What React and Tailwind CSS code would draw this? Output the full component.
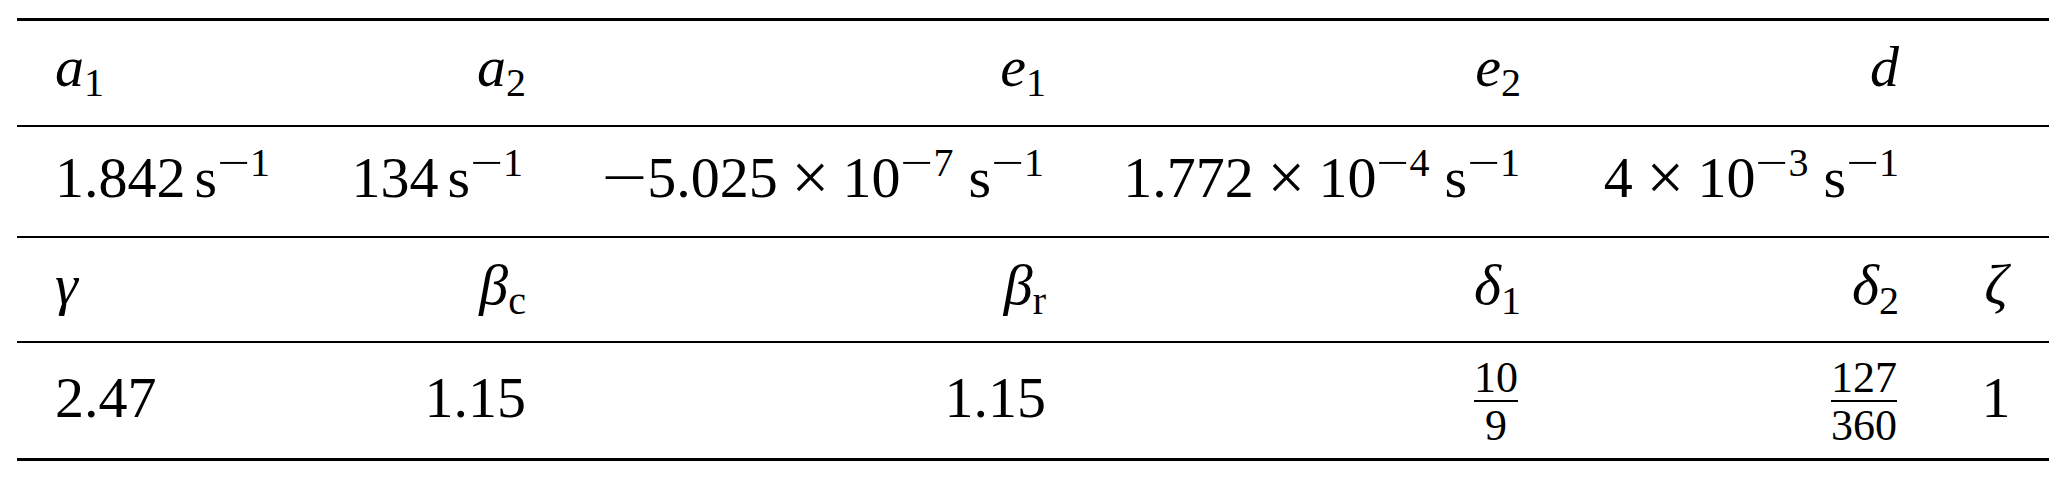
import React from 'react';

const cols = "grid grid-cols-[294px_253px_522px_477px_380px_106px]";

function Sub({ children }) {
  return <span className="relative top-[10px] text-[40px] not-italic">{children}</span>;
}

function Sup({ children }) {
  return <span className="relative -top-[21px] text-[40px]">{children}</span>;
}

function Minus({ small }) {
  return (
    <span className={small ? "inline-block w-[33px] text-center scale-x-[1.45]" : "inline-block w-[45px] text-center scale-x-[1.4]"}>
      −
    </span>
  );
}

// s^{-1}, gap depends on what stands before it
function PerSecond({ afterSup }) {
  return (
    <>
      <span className={afterSup ? "ml-[15px]" : "ml-[9px]"}>s</span>
      <Sup><Minus small />1</Sup>
    </>
  );
}

function Times() {
  return <span className="inline-block mx-[16px] scale-[1.15]">×</span>;
}

function Frac({ num, den }) {
  return (
    <span className="inline-flex flex-col items-center px-[3px] text-[44px] leading-none">
      <span>{num}</span>
      <span className="w-full h-[2px] bg-black"></span>
      <span className="mt-[2px]">{den}</span>
    </span>
  );
}

function Row({ h, last, children }) {
  return (
    <div className={`${cols} ${h} ${last ? "border-b-[3px]" : "border-b-2"} border-black`}>
      {children}
    </div>
  );
}

export default function App() {
  return (
    <div className="w-[2067px] h-[479px] bg-white text-black [font-family:'Liberation_Serif',serif] text-[58px] leading-none whitespace-nowrap">
      <div className="pt-[18px] pl-[17px]">
        <div className="w-[2032px] border-t-[3px] border-black">
          {/* header 1 */}
          <Row h="h-[106px]">
            <div className="pt-[17px] pl-[38px]"><i>a</i><Sub>1</Sub></div>
            <div className="pt-[17px] pr-[38px] text-right"><i>a</i><Sub>2</Sub></div>
            <div className="pt-[17px] pr-[40px] text-right"><i>e</i><Sub>1</Sub></div>
            <div className="pt-[17px] pr-[42px] text-right"><i>e</i><Sub>2</Sub></div>
            <div className="pt-[17px] pr-[44px] text-right"><i>d</i></div>
            <div></div>
          </Row>

          {/* values 1 */}
          <Row h="h-[111px]">
            <div className="pt-[22px] pl-[38px]">1.842<PerSecond /></div>
            <div className="pt-[22px] pr-[41px] text-right">134<PerSecond /></div>
            <div className="pt-[22px] pr-[42px] text-right">
              <Minus />5.025<Times />10<Sup><Minus small />7</Sup><PerSecond afterSup />
            </div>
            <div className="pt-[22px] pr-[43px] text-right">
              1.772<Times />10<Sup><Minus small />4</Sup><PerSecond afterSup />
            </div>
            <div className="pt-[22px] pr-[44px] text-right">
              4<Times />10<Sup><Minus small />3</Sup><PerSecond afterSup />
            </div>
            <div></div>
          </Row>

          {/* header 2 */}
          <Row h="h-[105px]">
            <div className="pt-[18px] pl-[38px]"><i>γ</i></div>
            <div className="pt-[18px] pr-[38px] text-right"><i>β</i><Sub>c</Sub></div>
            <div className="pt-[18px] pr-[40px] text-right"><i>β</i><Sub>r</Sub></div>
            <div className="pt-[18px] pr-[42px] text-right"><i>δ</i><Sub>1</Sub></div>
            <div className="pt-[18px] pr-[44px] text-right"><i>δ</i><Sub>2</Sub></div>
            <div className="pt-[18px] text-center"><i>ζ</i></div>
          </Row>

          {/* values 2 */}
          <Row h="h-[118px]" last>
            <div className="pt-[26px] pl-[38px]">2.47</div>
            <div className="pt-[26px] pr-[38px] text-right">1.15</div>
            <div className="pt-[26px] pr-[40px] text-right">1.15</div>
            <div className="pt-[13px] pr-[42px] flex justify-end"><Frac num="10" den="9" /></div>
            <div className="pt-[13px] pr-[43px] flex justify-end"><Frac num="127" den="360" /></div>
            <div className="pt-[26px] text-center">1</div>
          </Row>
        </div>
      </div>
    </div>
  );
}
